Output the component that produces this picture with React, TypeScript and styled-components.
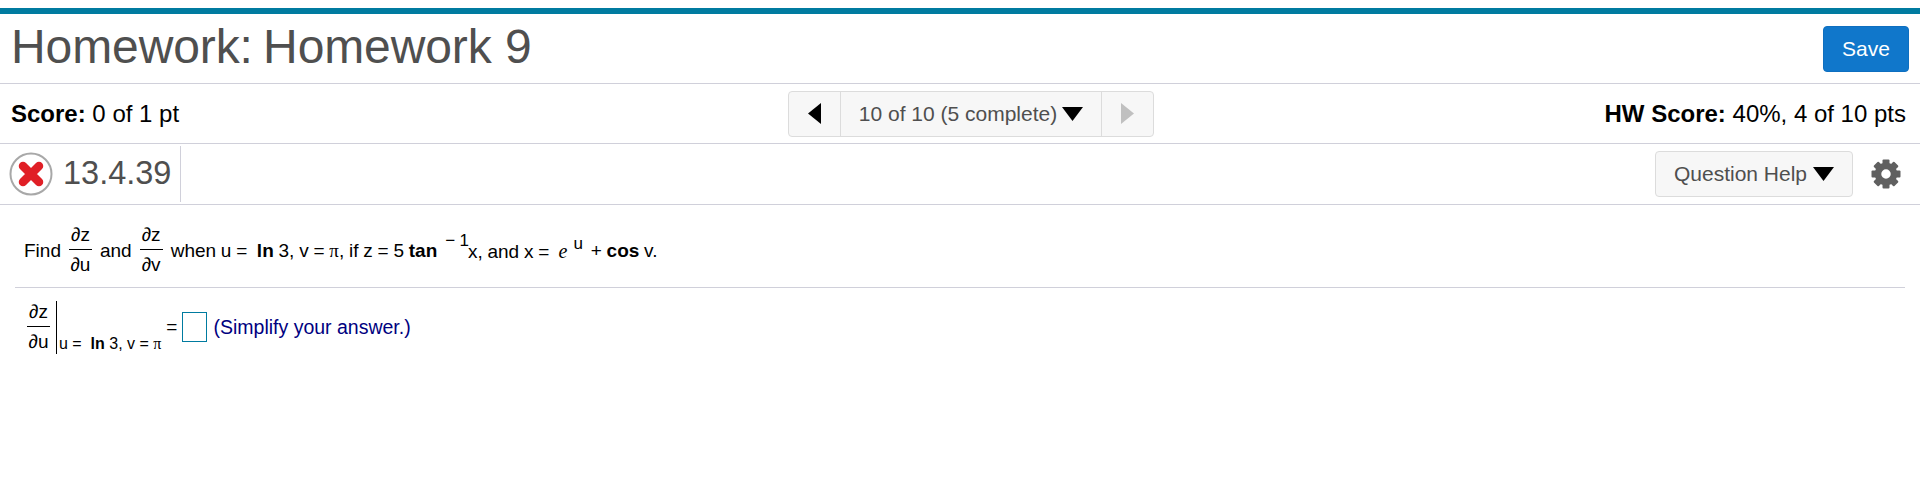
import React from 'react';
import styled, { createGlobalStyle } from 'styled-components';

const GlobalStyle = createGlobalStyle`
  html, body {
    margin: 0;
    padding: 0;
    background: #fff;
    font-family: "Liberation Sans", Arial, sans-serif;
  }
`;

const Page = styled.div`
  width: 1920px;
  height: 498px;
  overflow: hidden;
  padding-top: 8px;
  box-sizing: border-box;
`;

const TopBar = styled.div`
  height: 6px;
  background: #007ba0;
`;

const TitleRow = styled.div`
  height: 70px;
  box-sizing: border-box;
  display: flex;
  align-items: center;
  justify-content: space-between;
  padding: 0 11px 0 11px;
  border-bottom: 1px solid #d0d0da;
`;

const Title = styled.h1`
  margin: -3px 0 0;
  font-size: 48px;
  font-weight: 400;
  color: #4f4f4f;
  line-height: 54px;
  letter-spacing: -0.1px;
`;

const TitleLead = styled.span`
  margin-right: -3px;
`;

const SaveButton = styled.button`
  width: 86px;
  height: 46px;
  margin-top: 1px;
  border: 1px solid #0e6fc0;
  border-radius: 4px;
  background: #1077cb;
  color: #fff;
  font-family: inherit;
  font-size: 21px;
`;

const ScoreRow = styled.div`
  height: 60px;
  box-sizing: border-box;
  display: grid;
  grid-template-columns: 1fr auto 1fr;
  align-items: center;
  padding: 0 14px 0 11px;
  border-bottom: 1px solid #d0d0da;
`;

const ScoreText = styled.div<{ $right?: boolean }>`
  font-size: 24px;
  color: #000;
  text-align: ${props => (props.$right ? 'right' : 'left')};

  b {
    font-weight: 700;
  }
`;

const Pager = styled.div`
  display: flex;
  height: 46px;
  margin-left: 25px;
  box-sizing: border-box;
  border: 1px solid #dcdcdc;
  border-radius: 4px;
  background: #f7f7f7;
`;

const PagerArrow = styled.div<{ $side: 'left' | 'right' }>`
  width: 51px;
  display: flex;
  align-items: center;
  justify-content: center;
  ${props => (props.$side === 'left' ? 'border-right: 1px solid #dcdcdc;' : 'border-left: 1px solid #dcdcdc;')}
`;

const PagerLabel = styled.div`
  width: 260px;
  display: flex;
  align-items: center;
  justify-content: center;
  gap: 5px;
  font-size: 21px;
  color: #4f4f4f;
`;

const QuestionRow = styled.div`
  height: 61px;
  box-sizing: border-box;
  display: flex;
  align-items: center;
  justify-content: space-between;
  padding: 0 19px 0 9px;
  border-bottom: 1px solid #d0d0da;
`;

const QuestionId = styled.div`
  display: flex;
  align-items: center;
  height: 56px;
  margin-top: -1px;
  border-right: 1px solid #d0d0da;
  padding-right: 9px;
  gap: 10px;
  font-size: 32.5px;
  color: #4f4f4f;
`;

const QuestionTools = styled.div`
  display: flex;
  align-items: center;
  gap: 18px;
`;

const HelpButton = styled.button`
  display: flex;
  align-items: center;
  justify-content: center;
  gap: 6px;
  width: 198px;
  height: 46px;
  box-sizing: border-box;
  border: 1px solid #dcdcdc;
  border-radius: 4px;
  background: #f7f7f7;
  color: #4f4f4f;
  font-family: inherit;
  font-size: 21px;
`;

const Content = styled.div`
  padding: 18px 15px 0;
  font-size: 19px;
  color: #000;
`;

const ProblemLine = styled.div`
  display: flex;
  align-items: center;
  padding: 0 0 10px 9px;
  white-space: pre;
  word-spacing: -0.5px;
  border-bottom: 1px solid #d0d0da;
`;

const ProblemText = styled.span<{ $left?: number }>`
  margin-top: 2px;
  margin-left: ${props => props.$left ?? 0}px;
`;

const AnswerLine = styled.div`
  display: flex;
  align-items: center;
  margin-top: 12px;
  padding-left: 12px;
  white-space: pre;
`;

const Fraction = styled.span<{ $gap?: number }>`
  display: inline-flex;
  flex-direction: column;
  align-items: center;
  line-height: 24px;
  margin: 0 ${props => props.$gap ?? 8}px;
  font-size: 19px;
`;

const Numerator = styled.span`
  border-bottom: 1px solid #000;
  padding: 0 2px 2px;
  min-width: 19px;
  text-align: center;
`;

const Denominator = styled.span`
  padding-top: 3px;
`;

const Eval = styled.div`
  display: flex;
  align-items: flex-end;
  height: 53px;
  box-sizing: border-box;
  padding: 0 0 1px 2px;
  margin-left: 6px;
  border-left: 1px solid #000;
  font-size: 16px;
  white-space: pre;
`;

const MathSymbol = styled.span`
  font-family: "Liberation Serif", serif;
`;

const ItalicSymbol = styled.span`
  font-family: "Liberation Serif", serif;
  font-style: italic;
  font-size: 20px;
`;

const Superscript = styled.span<{ $left: number; $top: number }>`
  font-size: 17px;
  align-self: flex-start;
  margin-top: ${props => props.$top}px;
  margin-left: ${props => props.$left}px;
`;

const EqualSign = styled.span`
  margin-left: 5px;
`;

const AnswerBox = styled.span`
  display: inline-block;
  width: 23px;
  height: 28px;
  border: 1px solid #007ba0;
  margin: 0 6px 0 5px;
`;

const Hint = styled.span`
  color: #000080;
  font-size: 19.5px;
`;

const Triangle = ({ dir, color = '#000', w, h }: { dir: 'left' | 'right' | 'down'; color?: string; w: number; h: number }) => {
  const points = dir === 'left'
    ? `${w},0 ${w},${h} 0,${h / 2}`
    : dir === 'right'
      ? `0,0 0,${h} ${w},${h / 2}`
      : `0,0 ${w},0 ${w / 2},${h}`;
  return (
    <svg width={w} height={h} viewBox={`0 0 ${w} ${h}`}>
      <polygon points={points} fill={color} />
    </svg>
  );
};

const WrongIcon = () => (
  <svg width="44" height="44" viewBox="0 0 44 44">
    <circle cx="22" cy="22" r="20.5" fill="#fff" stroke="#a8a8a8" strokeWidth="2" />
    <path d="M14 14 L30 30 M30 14 L14 30" stroke="#e01f26" strokeWidth="8.5" strokeLinecap="round" />
  </svg>
);

const GearIcon = () => {
  const teeth = [0, 45, 90, 135, 180, 225, 270, 315];
  return (
    <svg width="30" height="30" viewBox="0 0 30 30">
      {teeth.map(angle => (
        <rect key={angle} x="11.5" y="0.5" width="7" height="7" rx="1" fill="#606060" transform={`rotate(${angle} 15 15)`} />
      ))}
      <circle cx="15" cy="15" r="8" fill="none" stroke="#606060" strokeWidth="6.5" />
    </svg>
  );
};

const App: React.FC = () => (
  <Page>
    <GlobalStyle />
    <TopBar />
    <TitleRow>
      <Title><TitleLead>Homework:</TitleLead> Homework 9</Title>
      <SaveButton>Save</SaveButton>
    </TitleRow>
    <ScoreRow>
      <ScoreText><b>Score:</b> 0 of 1 pt</ScoreText>
      <Pager>
        <PagerArrow $side="left"><Triangle dir="left" w={13} h={21} /></PagerArrow>
        <PagerLabel>10 of 10 (5 complete)<Triangle dir="down" w={21} h={14} /></PagerLabel>
        <PagerArrow $side="right"><Triangle dir="right" color="#c0c0c0" w={13} h={21} /></PagerArrow>
      </Pager>
      <ScoreText $right><b>HW Score:</b> 40%, 4 of 10 pts</ScoreText>
    </ScoreRow>
    <QuestionRow>
      <QuestionId><WrongIcon />13.4.39</QuestionId>
      <QuestionTools>
        <HelpButton>Question Help<Triangle dir="down" w={21} h={14} /></HelpButton>
        <GearIcon />
      </QuestionTools>
    </QuestionRow>
    <Content>
      <ProblemLine>
        <ProblemText>Find</ProblemText>
        <Fraction><Numerator>∂z</Numerator><Denominator>∂u</Denominator></Fraction>
        <ProblemText>and</ProblemText>
        <Fraction><Numerator>∂z</Numerator><Denominator>∂v</Denominator></Fraction>
        <ProblemText>when u = <b> ln</b> 3, v = <MathSymbol>π</MathSymbol>, if z = 5 <b>tan</b></ProblemText>
        <Superscript $left={8} $top={8}>− 1</Superscript>
        <ProblemText $left={-1}>x, and x = <ItalicSymbol> e</ItalicSymbol></ProblemText>
        <Superscript $left={6} $top={11}>u</Superscript>
        <ProblemText $left={3}> + <b>cos</b> v.</ProblemText>
      </ProblemLine>
      <AnswerLine>
        <Fraction $gap={0}><Numerator>∂z</Numerator><Denominator>∂u</Denominator></Fraction>
        <Eval>u = <b> ln</b> 3, v = <MathSymbol>π</MathSymbol></Eval>
        <EqualSign>=</EqualSign>
        <AnswerBox />
        <Hint>(Simplify your answer.)</Hint>
      </AnswerLine>
    </Content>
  </Page>
);

export default App;
